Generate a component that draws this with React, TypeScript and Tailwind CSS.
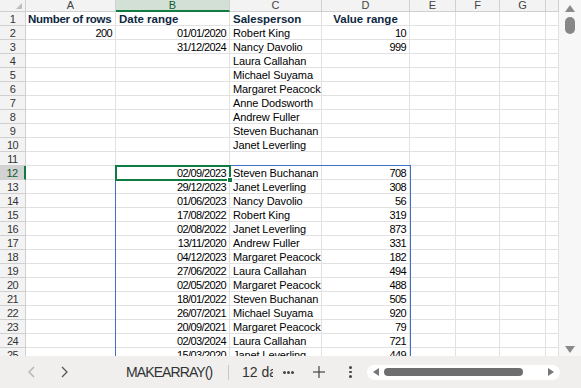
import React from "react";

const COLS = [90, 114, 92, 88, 46, 44, 46, 13];
const LETTERS = ["A", "B", "C", "D", "E", "F", "G", ""];

type Row = [string, string, string, string];
const ROWS: Row[] = [
  ["Number of rows", "Date range", "Salesperson", "Value range"],
  ["200", "01/01/2020", "Robert King", "10"],
  ["", "31/12/2024", "Nancy Davolio", "999"],
  ["", "", "Laura Callahan", ""],
  ["", "", "Michael Suyama", ""],
  ["", "", "Margaret Peacock", ""],
  ["", "", "Anne Dodsworth", ""],
  ["", "", "Andrew Fuller", ""],
  ["", "", "Steven Buchanan", ""],
  ["", "", "Janet Leverling", ""],
  ["", "", "", ""],
  ["", "02/09/2023", "Steven Buchanan", "708"],
  ["", "29/12/2023", "Janet Leverling", "308"],
  ["", "01/06/2023", "Nancy Davolio", "56"],
  ["", "17/08/2022", "Robert King", "319"],
  ["", "02/08/2022", "Janet Leverling", "873"],
  ["", "13/11/2020", "Andrew Fuller", "331"],
  ["", "04/12/2023", "Margaret Peacock", "182"],
  ["", "27/06/2022", "Laura Callahan", "494"],
  ["", "02/05/2020", "Margaret Peacock", "488"],
  ["", "18/01/2022", "Steven Buchanan", "505"],
  ["", "26/07/2021", "Michael Suyama", "920"],
  ["", "20/09/2021", "Margaret Peacock", "79"],
  ["", "02/03/2024", "Laura Callahan", "721"],
  ["", "15/03/2020", "Janet Leverling", "449"],
];

const FONT = { fontFamily: '"Liberation Sans", Arial, sans-serif' };

function HeaderRow() {
  return (
    <div className="flex h-[12px] shrink-0">
      <div className="relative w-[26px] shrink-0 border-r border-b border-[#d0d0d0] bg-[#f3f3f3]">
        <svg className="absolute right-[3px] bottom-[2px]" width="6" height="6" viewBox="0 0 6 6">
          <polygon points="6,0 6,6 0,6" fill="#bdbdbd" />
        </svg>
      </div>
      {COLS.map((w, i) => (
        <div
          key={i}
          style={{ width: w }}
          className={
            i === 1
              ? "shrink-0 border-r border-[#d0d0d0] border-b-2 border-b-[#107c41] bg-[#d3e0d6] text-[#0f5c32] text-[11px] leading-[11px] text-center"
              : "shrink-0 border-r border-b border-[#d0d0d0] bg-[#f3f3f3] text-[#444] text-[11px] leading-[11px] text-center"
          }
        >
          {LETTERS[i]}
        </div>
      ))}
    </div>
  );
}

function DataRow({ row, n }: { row: Row; n: number }) {
  const bold = n === 1;
  const selected = n === 12;
  return (
    <div className="flex h-[14px] shrink-0">
      <div
        className={
          selected
            ? "w-[26px] shrink-0 border-b border-[#d0d0d0] border-r-2 border-r-[#107c41] bg-[#d2d2d2] text-[#0f5c32] text-[11px] leading-[14px] tracking-[-0.5px] text-center"
            : "w-[26px] shrink-0 border-r border-b border-[#d0d0d0] bg-[#f3f3f3] text-[#333] text-[11px] leading-[14px] tracking-[-0.5px] text-center"
        }
      >
        {n}
      </div>
      {COLS.map((w, i) => {
        const val = i < 4 ? row[i] : "";
        let cls: string;
        if (bold) {
          if (i === 0) cls = "overflow-hidden px-[2px] text-left text-[11.5px] tracking-[-0.3px] font-bold text-[#0e2841]";
          else if (i === 3) cls = "px-[3px] text-center text-[11.5px] font-bold text-[#0e2841]";
          else cls = "px-[3px] text-left text-[11.5px] font-bold text-[#0e2841]";
        } else if (i === 2) {
          cls = "overflow-visible px-[3px] text-left text-[11px] tracking-[-0.1px] text-black";
        } else {
          cls = "overflow-visible px-[3px] text-right text-[11px] tracking-[-0.6px] text-black";
        }
        return (
          <div
            key={i}
            style={{ width: w }}
            className={`shrink-0 whitespace-nowrap border-r border-b border-[#e1e1e1] leading-[14px] ${cls}`}
          >
            {val}
          </div>
        );
      })}
    </div>
  );
}

function VScroll() {
  return (
    <div className="relative w-[22px] shrink-0 bg-[#f7f7f7]">
      <svg className="absolute left-[6px] top-[5px]" width="10" height="7" viewBox="0 0 10 7">
        <polygon points="5,0 10,7 0,7" fill="#8a8a8a" />
      </svg>
      <div className="absolute left-[6px] top-[17px] h-[17px] w-[10px] rounded-full bg-[#878787]" />
      <svg className="absolute left-[6px] bottom-[3px]" width="10" height="7" viewBox="0 0 10 7">
        <polygon points="0,0 10,0 5,7" fill="#8a8a8a" />
      </svg>
    </div>
  );
}

function BottomBar() {
  return (
    <div className="flex h-[32px] shrink-0 items-center bg-[#f0efed] text-[#333]">
      <div className="w-[26px] shrink-0" />
      <svg width="10" height="12" viewBox="0 0 10 12" className="ml-[1px] shrink-0">
        <polyline points="7,1 2,6 7,11" fill="none" stroke="#b0b0b0" strokeWidth="1.3" />
      </svg>
      <svg width="10" height="12" viewBox="0 0 10 12" className="ml-[22px] shrink-0">
        <polyline points="3,1 8,6 3,11" fill="none" stroke="#555" strokeWidth="1.3" />
      </svg>
      <div className="ml-[57px] w-[102px] shrink-0 whitespace-nowrap text-[14px] tracking-[-0.9px] text-[#333]">MAKEARRAY()</div>
      <div className="h-[15px] w-px shrink-0 bg-[#c8c8c8]" />
      <div className="ml-[13px] w-[31px] shrink-0 overflow-hidden whitespace-nowrap text-[14px] text-[#333]">12 data</div>
      <div className="ml-[10px] flex w-[12px] shrink-0 gap-[1px]">
        <span className="h-[3px] w-[3px] rounded-full bg-[#444]" />
        <span className="h-[3px] w-[3px] rounded-full bg-[#444]" />
        <span className="h-[3px] w-[3px] rounded-full bg-[#444]" />
      </div>
      <svg width="12" height="12" viewBox="0 0 12 12" className="ml-[18px] shrink-0">
        <line x1="6" y1="0" x2="6" y2="12" stroke="#444" strokeWidth="1.2" />
        <line x1="0" y1="6" x2="12" y2="6" stroke="#444" strokeWidth="1.2" />
      </svg>
      <div className="ml-[24px] flex w-[3px] shrink-0 flex-col gap-[2px]">
        <span className="h-[2.5px] w-[2.5px] rounded-full bg-[#444]" />
        <span className="h-[2.5px] w-[2.5px] rounded-full bg-[#444]" />
        <span className="h-[2.5px] w-[2.5px] rounded-full bg-[#444]" />
      </div>
      <div className="relative ml-[15px] flex h-[15px] w-[193px] shrink-0 items-center rounded-full bg-white">
        <svg width="6" height="8" viewBox="0 0 6 8" className="ml-[6px] shrink-0">
          <polygon points="6,0 6,8 0,4" fill="#777" />
        </svg>
        <div className="ml-[5px] h-[8px] w-[139px] shrink-0 rounded-full bg-[#6e6e6e]" />
        <svg width="6" height="8" viewBox="0 0 6 8" className="ml-[25px] shrink-0">
          <polygon points="0,0 6,4 0,8" fill="#777" />
        </svg>
      </div>
    </div>
  );
}

export default function App() {
  return (
    <div className="flex h-[388px] w-[581px] flex-col overflow-hidden bg-white" style={FONT}>
      <div className="flex h-[356px] shrink-0">
        <div className="relative w-[559px] shrink-0 overflow-hidden">
          <HeaderRow />
          {ROWS.map((r, i) => (
            <DataRow key={i} row={r} n={i + 1} />
          ))}
          <div className="pointer-events-none absolute left-[115px] top-[165px] h-[220px] w-[296px] border border-[#3f6fc6]" />
          <div className="pointer-events-none absolute left-[115px] top-[165px] h-[16px] w-[116px] border-2 border-[#107c41]" />
          <div className="pointer-events-none absolute left-[227px] top-[177px] h-[6px] w-[6px] border border-white bg-[#107c41]" />
        </div>
        <VScroll />
      </div>
      <BottomBar />
    </div>
  );
}
